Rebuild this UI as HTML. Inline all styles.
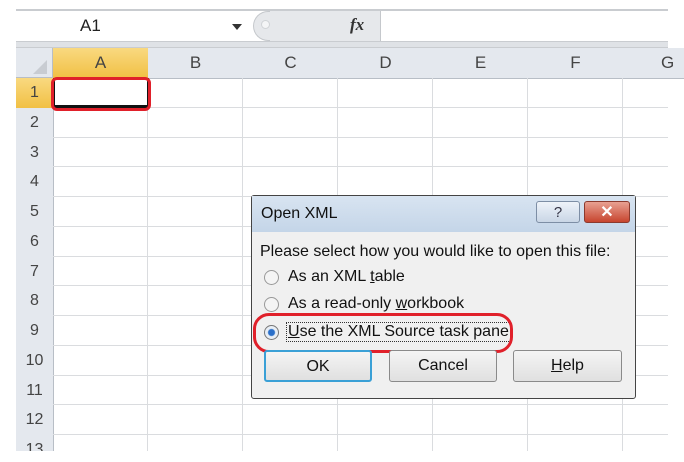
<!DOCTYPE html><html><head><style>
body{margin:0;width:684px;height:462px;background:#fff;position:relative;overflow:hidden;font-family:"Liberation Sans",sans-serif;}
.a{position:absolute;box-sizing:border-box}
.ch{position:absolute;top:48px;height:30px;border-right:1px solid #c5c9cf;background:#e4e8ee;font-size:17px;color:#444;text-align:center;line-height:30px;border-bottom:1px solid #b8bec6}
.rh{position:absolute;left:16px;width:37px;background:#e4e8ee;border-bottom:1px solid #c5c9cf;border-right:1px solid #b8bec6;font-size:16px;color:#444;text-align:center}
.vl{position:absolute;top:78px;height:373px;width:1px;background:#dadcdf}
.hl{position:absolute;left:53px;width:615px;height:1px;background:#dadcdf}
.btn{position:absolute;top:350px;height:32px;border:1px solid #8a8a8a;border-radius:3px;background:linear-gradient(#f4f4f4,#e0e0e0);font-size:16px;text-align:center;line-height:30px;color:#111;box-sizing:border-box}
</style></head><body>
<div class="a" style="left:16px;top:9px;width:652px;height:2px;background:#c9ccd0"></div>
<div class="a" style="left:16px;top:11px;width:652px;height:30px;background:#fff"></div>
<div class="a" style="left:80px;top:16px;font-size:17px;color:#222">A1</div>
<div class="a" style="left:232px;top:24px;width:0;height:0;border-left:5px solid transparent;border-right:5px solid transparent;border-top:6px solid #333"></div>
<div class="a" style="left:253px;top:11px;width:35px;height:30px;border-radius:15px 0 0 15px;background:#e6e8eb;border:1px solid #c5c8cc;border-right:none"></div>
<div class="a" style="left:270px;top:11px;width:110px;height:30px;background:#e6e8eb"></div>
<div class="a" style="left:261px;top:20px;width:9px;height:9px;border-radius:50%;background:#f4f5f6;border:1px solid #d0d3d6"></div>
<div class="a" style="left:380px;top:11px;width:1px;height:30px;background:#c5c8cc"></div>
<div class="a" style="left:350px;top:15px;font-family:'Liberation Serif',serif;font-style:italic;font-weight:bold;font-size:17px;color:#333">fx</div>
<div class="a" style="left:16px;top:41px;width:652px;height:7px;background:#dfe2e6;border-top:1px solid #c9ccd0;border-bottom:1px solid #c9ccd0"></div>
<div class="a" style="left:16px;top:48px;width:37px;height:30px;background:#e4e8ee;border-right:1px solid #b8bec6;border-bottom:1px solid #b8bec6"></div>
<div class="a" style="left:33px;top:60px;width:0;height:0;border-left:14px solid transparent;border-bottom:14px solid #c8ccd2"></div>
<div class="ch" style="left:53px;width:95px;background:linear-gradient(#f9d980,#f1c044);border-bottom-color:#e2a530">A</div>
<div class="ch" style="left:148px;width:95px">B</div>
<div class="ch" style="left:243px;width:95px">C</div>
<div class="ch" style="left:338px;width:95px">D</div>
<div class="ch" style="left:433px;width:95px">E</div>
<div class="ch" style="left:528px;width:95px">F</div>
<div class="ch" style="left:623px;width:45px;text-align:left;padding-left:38px;border-right:none;overflow:hidden">G</div>
<div class="rh" style="top:78px;height:30px;line-height:30px;background:linear-gradient(#f9d980,#f1c044)">1</div>
<div class="rh" style="top:108px;height:30px;line-height:30px">2</div>
<div class="rh" style="top:138px;height:29px;line-height:29px">3</div>
<div class="rh" style="top:167px;height:30px;line-height:30px">4</div>
<div class="rh" style="top:197px;height:30px;line-height:30px">5</div>
<div class="rh" style="top:227px;height:30px;line-height:30px">6</div>
<div class="rh" style="top:257px;height:29px;line-height:29px">7</div>
<div class="rh" style="top:286px;height:30px;line-height:30px">8</div>
<div class="rh" style="top:316px;height:30px;line-height:30px">9</div>
<div class="rh" style="top:346px;height:30px;line-height:30px">10</div>
<div class="rh" style="top:376px;height:29px;line-height:29px">11</div>
<div class="rh" style="top:405px;height:30px;line-height:30px">12</div>
<div class="rh" style="top:435px;height:16px;line-height:30px;overflow:hidden;border-bottom:none">13</div>
<div class="vl" style="left:147px"></div><div class="vl" style="left:242px"></div><div class="vl" style="left:337px"></div><div class="vl" style="left:432px"></div><div class="vl" style="left:527px"></div><div class="vl" style="left:622px"></div>
<div class="hl" style="top:107px"></div><div class="hl" style="top:137px"></div><div class="hl" style="top:166px"></div><div class="hl" style="top:196px"></div><div class="hl" style="top:226px"></div><div class="hl" style="top:256px"></div><div class="hl" style="top:285px"></div><div class="hl" style="top:315px"></div><div class="hl" style="top:345px"></div><div class="hl" style="top:375px"></div><div class="hl" style="top:404px"></div><div class="hl" style="top:434px"></div>
<div class="a" style="left:53px;top:78px;width:96px;height:31px;border:2px solid #111;border-bottom-width:4px"></div>
<div class="a" style="left:51px;top:77px;width:100px;height:34px;border:3px solid #e0202a;border-radius:6px"></div>
<div class="a" style="left:251px;top:195px;width:385px;height:204px;border:1px solid #444;background:#f0f0f0;border-radius:3px"></div>
<div class="a" style="left:252px;top:196px;width:383px;height:36px;background:linear-gradient(#d8e4f1,#c4d5e8)"></div>
<div class="a" style="left:261px;top:205px;font-size:16px;color:#111">Open XML</div>
<div class="a" style="left:536px;top:201px;width:44px;height:22px;border:1px solid #7d8ea5;border-radius:3px;background:linear-gradient(#eef3f9,#c9d6e6);text-align:center;font-size:15px;line-height:21px;color:#334">?</div>
<div class="a" style="left:584px;top:201px;width:46px;height:22px;border:1px solid #8b3a2e;border-radius:3px;background:linear-gradient(#e8a192,#c7452f);text-align:center;font-size:16px;font-weight:bold;line-height:21px;color:#fff">✕</div>
<div class="a" style="left:260px;top:243px;font-size:16px;color:#111">Please select how you would like to open this file:</div>
<div class="a" style="left:264px;top:270px;width:15px;height:15px;border-radius:50%;border:1px solid #999;background:#f4f4f4"></div>
<div class="a" style="left:288px;top:268px;font-size:16px;color:#111">As an XML <u>t</u>able</div>
<div class="a" style="left:264px;top:297px;width:15px;height:15px;border-radius:50%;border:1px solid #999;background:#f4f4f4"></div>
<div class="a" style="left:288px;top:295px;font-size:16px;color:#111">As a read-only <u>w</u>orkbook</div>
<div class="a" style="left:264px;top:325px;width:15px;height:15px;border-radius:50%;border:1px solid #777;background:radial-gradient(circle,#2a6fc9 3px,#e8eef5 4px)"></div>
<div class="a" style="left:286px;top:322px;font-size:16px;color:#111;border:1px dotted #333;padding:0 1px"><u>U</u>se the XML Source task pane</div>
<div class="a" style="left:253px;top:313px;width:260px;height:40px;border:3px solid #e0202a;border-radius:16px"></div>
<div class="btn" style="left:264px;width:108px;border:2px solid #3aa0d6">OK</div>
<div class="btn" style="left:389px;width:108px">Cancel</div>
<div class="btn" style="left:513px;width:109px"><u>H</u>elp</div>
</body></html>
